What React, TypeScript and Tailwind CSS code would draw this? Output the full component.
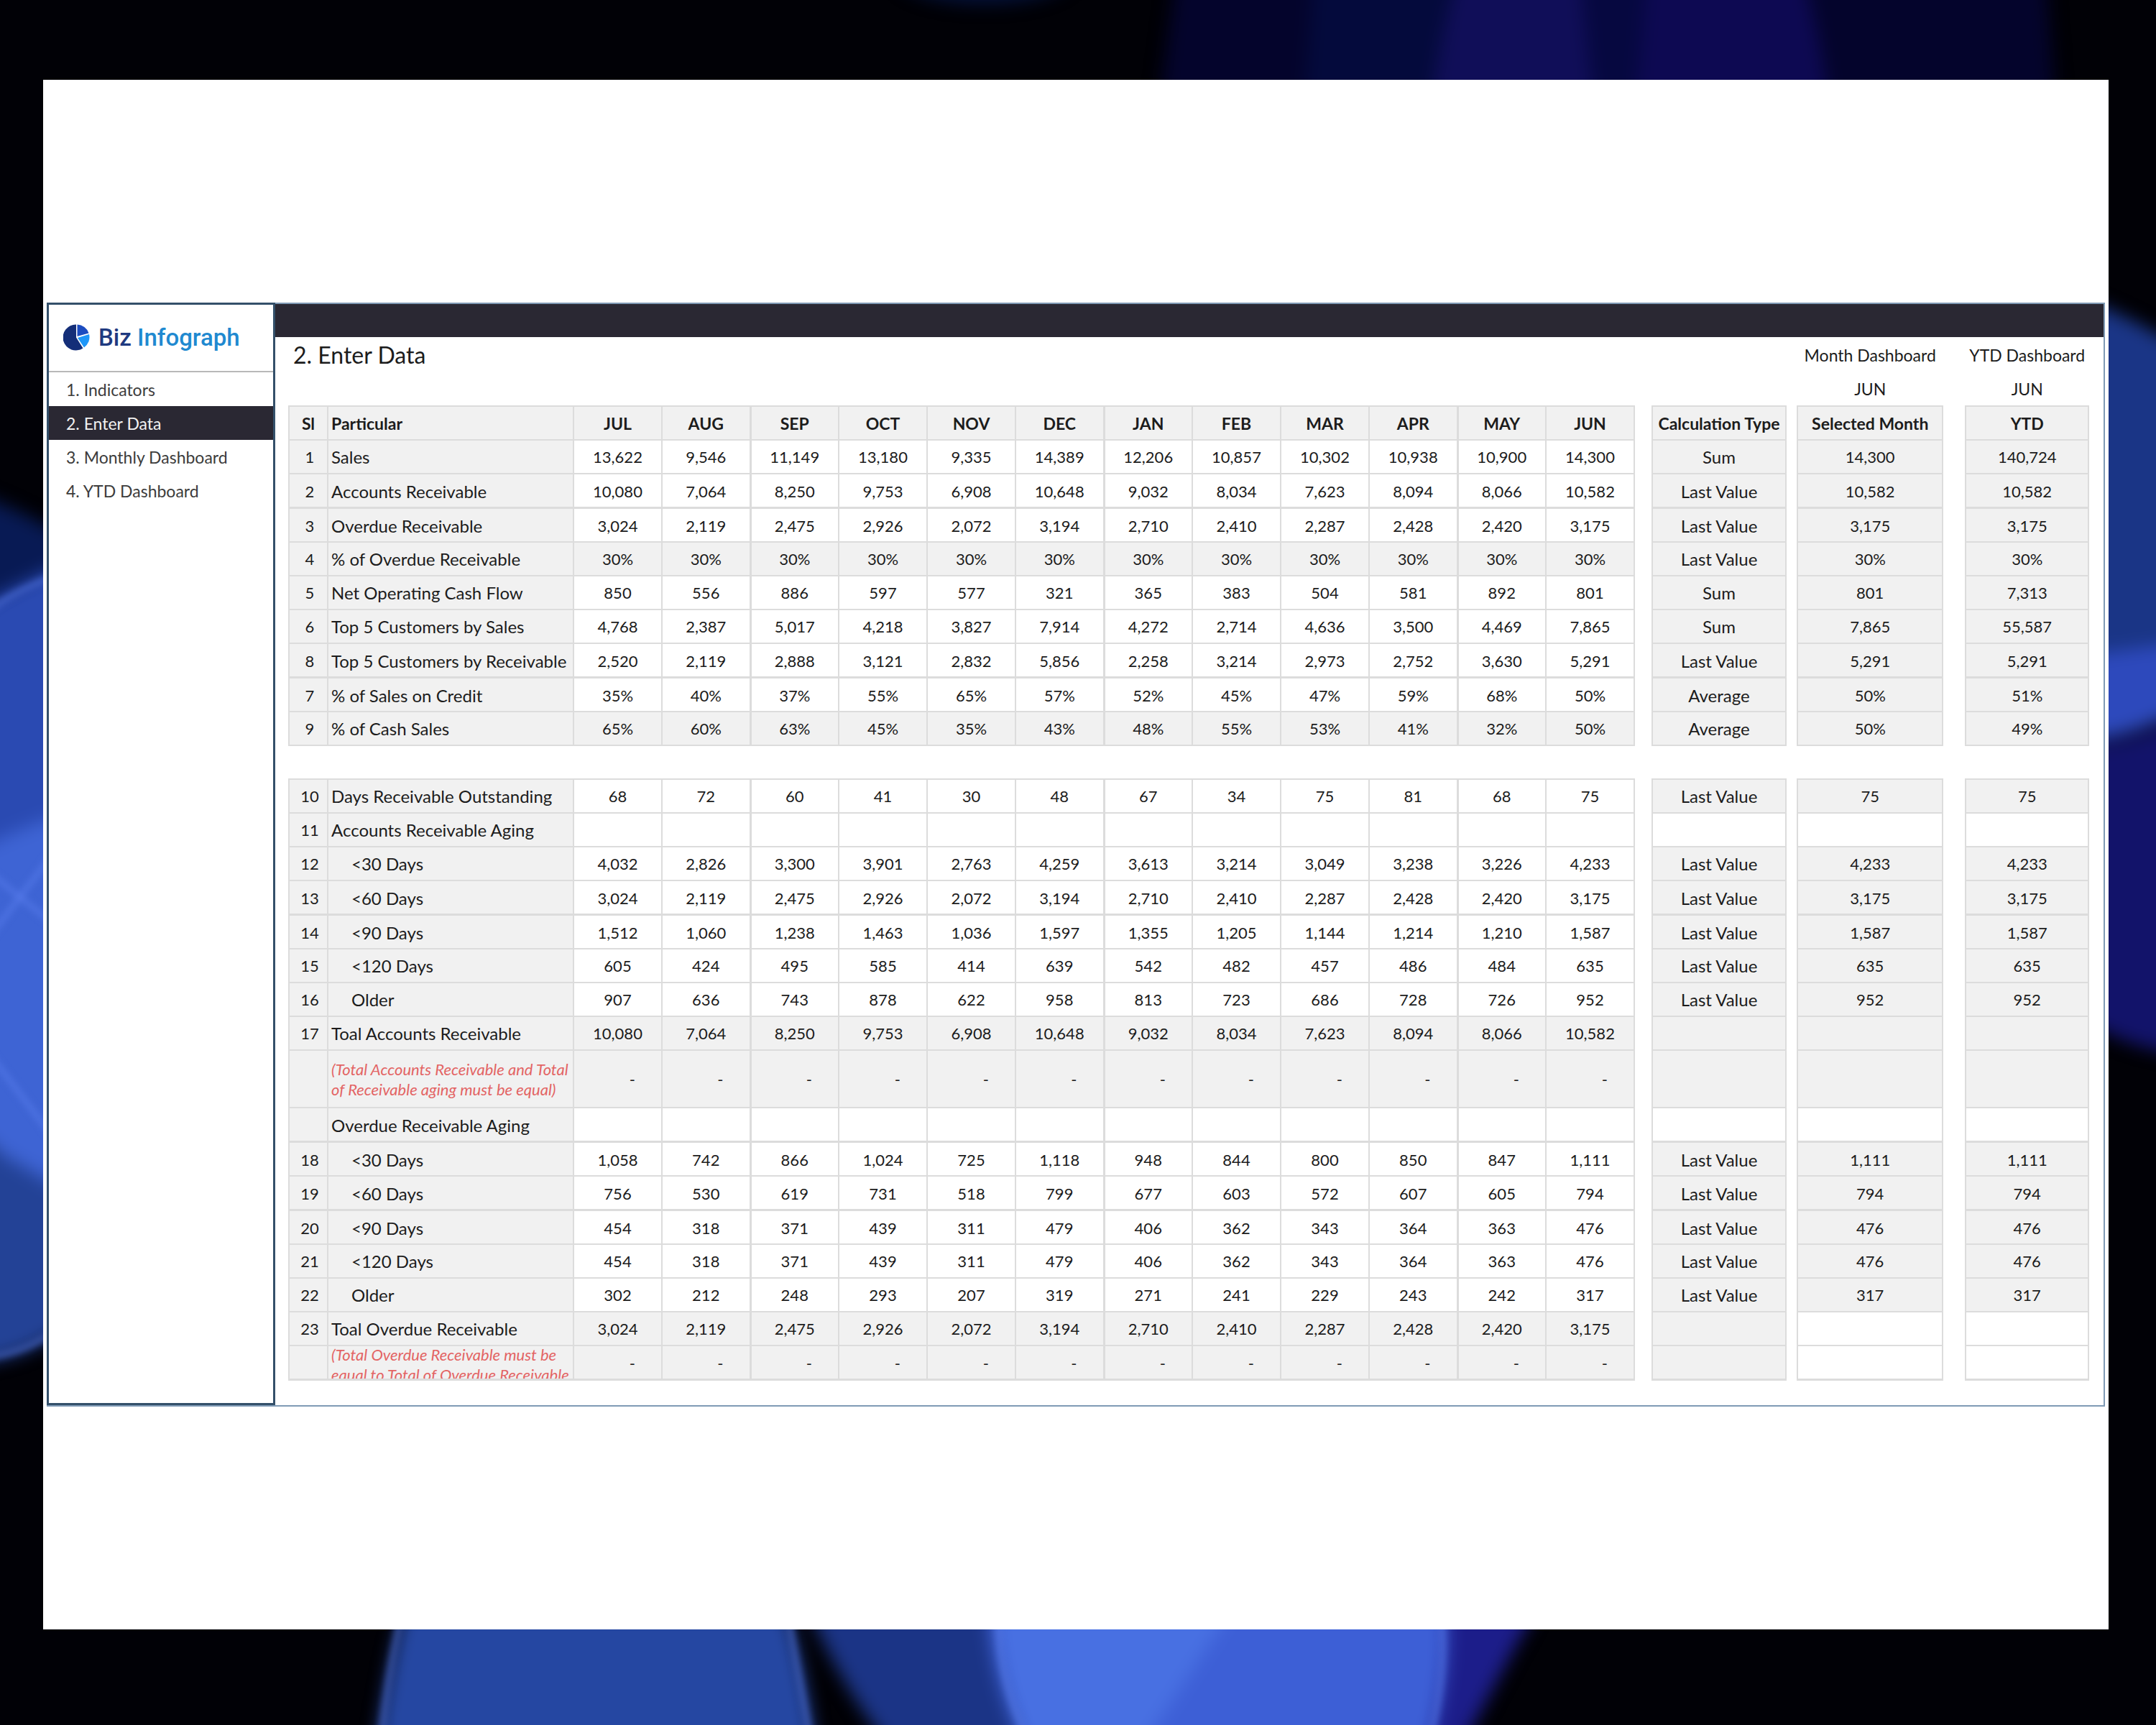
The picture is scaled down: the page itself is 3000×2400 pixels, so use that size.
const MONTHS = ['JUL', 'AUG', 'SEP', 'OCT', 'NOV', 'DEC', 'JAN', 'FEB', 'MAR', 'APR', 'MAY', 'JUN']

const NAV_ITEMS = ['1. Indicators', '2. Enter Data', '3. Monthly Dashboard', '4. YTD Dashboard']

type Row = {
  sl: string
  label: string
  values?: string
  calc?: string
  month?: string
  ytd?: string
  indent?: boolean
  // computed rows are shaded across all months
  shaded?: boolean
  // rows closed by the heavier rule
  heavy?: boolean
  // summary columns left white
  plainSummary?: boolean
  plainCalc?: boolean
}

const TOP_ROWS: Row[] = [
  { sl: '1', label: 'Sales', values: '13,622 9,546 11,149 13,180 9,335 14,389 12,206 10,857 10,302 10,938 10,900 14,300', calc: 'Sum', month: '14,300', ytd: '140,724' },
  { sl: '2', label: 'Accounts Receivable', values: '10,080 7,064 8,250 9,753 6,908 10,648 9,032 8,034 7,623 8,094 8,066 10,582', calc: 'Last Value', month: '10,582', ytd: '10,582', heavy: true },
  { sl: '3', label: 'Overdue Receivable', values: '3,024 2,119 2,475 2,926 2,072 3,194 2,710 2,410 2,287 2,428 2,420 3,175', calc: 'Last Value', month: '3,175', ytd: '3,175' },
  { sl: '4', label: '% of Overdue Receivable', values: '30% 30% 30% 30% 30% 30% 30% 30% 30% 30% 30% 30%', calc: 'Last Value', month: '30%', ytd: '30%', shaded: true },
  { sl: '5', label: 'Net Operating Cash Flow', values: '850 556 886 597 577 321 365 383 504 581 892 801', calc: 'Sum', month: '801', ytd: '7,313' },
  { sl: '6', label: 'Top 5 Customers by Sales', values: '4,768 2,387 5,017 4,218 3,827 7,914 4,272 2,714 4,636 3,500 4,469 7,865', calc: 'Sum', month: '7,865', ytd: '55,587' },
  { sl: '8', label: 'Top 5 Customers by Receivable', values: '2,520 2,119 2,888 3,121 2,832 5,856 2,258 3,214 2,973 2,752 3,630 5,291', calc: 'Last Value', month: '5,291', ytd: '5,291', heavy: true },
  { sl: '7', label: '% of Sales on Credit', values: '35% 40% 37% 55% 65% 57% 52% 45% 47% 59% 68% 50%', calc: 'Average', month: '50%', ytd: '51%' },
  { sl: '9', label: '% of Cash Sales', values: '65% 60% 63% 45% 35% 43% 48% 55% 53% 41% 32% 50%', calc: 'Average', month: '50%', ytd: '49%', shaded: true },
]

const AGING_ROWS: Row[] = [
  { sl: '10', label: 'Days Receivable Outstanding', values: '68 72 60 41 30 48 67 34 75 81 68 75', calc: 'Last Value', month: '75', ytd: '75' },
  { sl: '11', label: 'Accounts Receivable Aging', plainSummary: true, plainCalc: true },
  { sl: '12', label: '<30 Days', values: '4,032 2,826 3,300 3,901 2,763 4,259 3,613 3,214 3,049 3,238 3,226 4,233', calc: 'Last Value', month: '4,233', ytd: '4,233', indent: true },
  { sl: '13', label: '<60 Days', values: '3,024 2,119 2,475 2,926 2,072 3,194 2,710 2,410 2,287 2,428 2,420 3,175', calc: 'Last Value', month: '3,175', ytd: '3,175', indent: true, heavy: true },
  { sl: '14', label: '<90 Days', values: '1,512 1,060 1,238 1,463 1,036 1,597 1,355 1,205 1,144 1,214 1,210 1,587', calc: 'Last Value', month: '1,587', ytd: '1,587', indent: true },
  { sl: '15', label: '<120 Days', values: '605 424 495 585 414 639 542 482 457 486 484 635', calc: 'Last Value', month: '635', ytd: '635', indent: true },
  { sl: '16', label: 'Older', values: '907 636 743 878 622 958 813 723 686 728 726 952', calc: 'Last Value', month: '952', ytd: '952', indent: true },
  { sl: '17', label: 'Toal Accounts Receivable', values: '10,080 7,064 8,250 9,753 6,908 10,648 9,032 8,034 7,623 8,094 8,066 10,582', shaded: true },
]

const OVERDUE_ROWS: Row[] = [
  { sl: '', label: 'Overdue Receivable Aging', plainSummary: true, plainCalc: true, heavy: true },
  { sl: '18', label: '<30 Days', values: '1,058 742 866 1,024 725 1,118 948 844 800 850 847 1,111', calc: 'Last Value', month: '1,111', ytd: '1,111', indent: true },
  { sl: '19', label: '<60 Days', values: '756 530 619 731 518 799 677 603 572 607 605 794', calc: 'Last Value', month: '794', ytd: '794', indent: true, heavy: true },
  { sl: '20', label: '<90 Days', values: '454 318 371 439 311 479 406 362 343 364 363 476', calc: 'Last Value', month: '476', ytd: '476', indent: true },
  { sl: '21', label: '<120 Days', values: '454 318 371 439 311 479 406 362 343 364 363 476', calc: 'Last Value', month: '476', ytd: '476', indent: true },
  { sl: '22', label: 'Older', values: '302 212 248 293 207 319 271 241 229 243 242 317', calc: 'Last Value', month: '317', ytd: '317', indent: true },
  { sl: '23', label: 'Toal Overdue Receivable', values: '3,024 2,119 2,475 2,926 2,072 3,194 2,710 2,410 2,287 2,428 2,420 3,175', shaded: true, plainSummary: true },
]

const CELL = 'border-2 border-[#dcdcdc] p-0 pt-0.5'
const SHADE = 'bg-[#f1f1f1]'

// every fourth month closes with a heavier vertical rule
const monthRule = (i: number) => (i % 4 === 1 ? 'border-r-3' : '')

function Backdrop() {
  return (
    <svg
      className="absolute inset-0 -z-10 h-full w-full"
      viewBox="0 0 3000 2400"
      preserveAspectRatio="none"
      aria-hidden="true"
    >
      <defs>
        <filter id="soft" x="-20%" y="-20%" width="140%" height="140%" colorInterpolationFilters="sRGB">
          <feGaussianBlur stdDeviation="12" />
        </filter>
        <filter id="streak" x="-20%" y="-20%" width="140%" height="140%" colorInterpolationFilters="sRGB">
          <feGaussianBlur stdDeviation="5" />
        </filter>
      </defs>
      <rect width="3000" height="2400" fill="#010106" />
      <g filter="url(#soft)">
        {/* top */}
        <ellipse cx="1370" cy="-35" rx="120" ry="40" fill="#04123c" />
        <path d="M1640-60 1605 200H2865L2845-60Z" fill="#04042c" />
        <path d="M1830-60 1810 200H2010L2040-60Z" fill="#040a3c" />
        <path d="M2040-60Q2000 40 1985 200H2225L2195-60Z" fill="#100e58" />
        <path d="M2195-60 2225 200H2270L2295-60Z" fill="#060840" />
        <path d="M2295-60 2270 200H2550Q2540 60 2500-60Z" fill="#0d0952" />
        {/* left */}
        <path d="M-60 680Q10 695 130 770V860H-60Z" fill="#081a54" />
        <path d="M-60 860Q0 825 130 765V1200H-60Z" fill="#2a4ab2" />
        <path d="M-60 1200Q20 1150 130 1120V1700L-60 1560Z" fill="#3e64d4" />
        <path d="M-60 1570 130 1680V1800Q70 1895-60 1898Z" fill="#234296" />
        {/* right */}
        <path d="M2880 410Q2960 435 3060 500V1000H2880Z" fill="#1a3586" />
        <path d="M2880 915 3060 890V970Q2980 1030 2880 1032Z" fill="#2d49bc" />
        <path d="M2880 1038Q2990 1035 3060 980V1470Q2940 1460 2880 1400Z" fill="#12136a" />
        {/* bottom */}
        <path d="M575 2200Q540 2300 520 2460H1138Q1120 2300 1080 2200Z" fill="#2547a2" />
        <path d="M1110 2200Q1160 2340 1260 2460H2000V2200Z" fill="#1b3486" />
        <path d="M1900 2200H2160Q2080 2340 2020 2460H1900Z" fill="#1c1d8a" />
        <path d="M1375 2200Q1370 2330 1440 2460H1980Q2030 2300 2005 2200Z" fill="#3d5fd6" />
        <path d="M1385 2200Q1380 2330 1440 2460H1570L1740 2200Z" fill="#4870e2" />
      </g>
      <g fill="none" stroke="#5b7ff0" strokeOpacity="0.5" strokeWidth="8" filter="url(#streak)">
        <path d="M-20 855Q10 825 80 800" />
        <path d="M-20 1210 80 1290" />
        <path d="M-20 1310 80 1180" />
        <path d="M-20 1460 80 1590" />
        <path d="M-20 1888Q30 1885 80 1850" />
        <path d="M560 2240Q540 2320 530 2420" />
        <path d="M1095 2240 1128 2420" />
        <path d="M1390 2240Q1385 2330 1430 2420" />
        <path d="M2005 2240Q2015 2320 1990 2420" />
      </g>
    </svg>
  )
}

function Logo() {
  return (
    <a href="#" className="flex h-[94px] items-center gap-3 border-b-2 border-[#b8b8b8] pl-5">
      <svg className="h-[37px] w-[37px]" viewBox="0 0 37 37" aria-hidden="true">
        <path d="M18 18.500V0.500A18 18 0 1 0 27.500 33.500Z" fill="#142e78" />
        <path d="M19.500 17V0.500A17.500 17.500 0 0 1 35.500 12.500Z" fill="#1c4cc0" />
        <path d="M20 19 36 14A17.500 17.500 0 0 1 29 32.500Z" fill="#1e96f8" />
      </svg>
      <span className="font-[Roboto,sans-serif] text-[33px] leading-none font-medium text-[#1f3a80]">
        Biz <span className="text-[#2089d0]">Infograph</span>
      </span>
    </a>
  )
}

function Sidebar() {
  return (
    <aside className="-mt-0.5 -ml-0.5 w-[318px] shrink-0 border-3 border-[#34506a] bg-white">
      <Logo />
      <nav className="flex flex-col">
        {NAV_ITEMS.map((item, i) => (
          <a
            key={item}
            href="#"
            aria-current={i === 1 ? 'page' : undefined}
            className={
              i === 1
                ? 'flex h-[47px] items-center bg-[#2a2833] pt-0.5 pl-6 text-[#f2f2f2]'
                : 'flex h-[47px] items-center pt-0.5 pl-6 text-[#3c3c3c]'
            }
          >
            {item}
          </a>
        ))}
      </nav>
    </aside>
  )
}

function Spacer() {
  return <td className="p-0" />
}

function DataRow({ row }: { row: Row }) {
  const values = row.values ? row.values.split(' ') : MONTHS.map(() => '')
  const summary = row.plainSummary ? CELL : `${CELL} ${SHADE}`
  return (
    <tr className={row.heavy ? 'h-12 [&>td[class*=border]]:border-b-3 [&>th]:border-b-3' : 'h-[47px]'}>
      <td className={`${CELL} ${SHADE} pl-1`}>{row.sl}</td>
      <th scope="row" className={`${CELL} ${SHADE} text-left text-2xl leading-7 font-normal whitespace-nowrap ${row.indent ? 'pl-8' : 'pl-1'}`}>
        {row.label}
      </th>
      {values.map((value, i) => (
        <td key={i} className={`${CELL} ${monthRule(i)} ${row.shaded ? SHADE : ''}`}>{value}</td>
      ))}
      <Spacer />
      <td className={`${CELL} text-2xl leading-7 ${row.plainCalc ? '' : SHADE}`}>{row.calc}</td>
      <Spacer />
      <td className={summary}>{row.month}</td>
      <Spacer />
      <td className={summary}>{row.ytd}</td>
    </tr>
  )
}

function CheckRow({ note, last }: { note: string; last?: boolean }) {
  const summary = last ? CELL : `${CELL} ${SHADE}`
  return (
    <tr className={last ? 'h-12 [&>td[class*=border]]:border-b-3 [&>th]:border-b-3' : 'h-20'}>
      <td className={`${CELL} ${SHADE}`} />
      <th scope="row" className={`${CELL} ${SHADE} pl-1 text-left leading-7 font-normal text-[#e36464] italic`}>
        <div className={last ? 'h-[43px] overflow-hidden' : ''}>
          <div className={last ? '-mt-1 whitespace-pre' : 'whitespace-pre'}>{note}</div>
        </div>
      </th>
      {MONTHS.map((month, i) => (
        <td key={month} className={`${CELL} ${SHADE} ${monthRule(i)} pr-9 text-right`}>-</td>
      ))}
      <Spacer />
      <td className={`${CELL} ${SHADE}`} />
      <Spacer />
      <td className={summary} />
      <Spacer />
      <td className={summary} />
    </tr>
  )
}

function DataTable() {
  return (
    <table className="w-full table-fixed border-collapse text-center text-[22px] leading-7">
      <colgroup>
        <col className="w-[54px]" />
        <col className="w-[342px]" />
        {MONTHS.map((month) => (
          <col key={month} className="w-[123px]" />
        ))}
        <col className="w-[25px]" />
        <col className="w-[186px]" />
        <col className="w-4" />
        <col className="w-[202px]" />
        <col className="w-8" />
        <col className="w-[171px]" />
      </colgroup>
      <thead>
        <tr className="h-12 text-[23px]">
          <td colSpan={17} className="p-0 pt-0.5 pl-1.5 text-left">
            <h1 className="text-[32px] leading-none">2. Enter Data</h1>
          </td>
          <td className="p-0 pt-0.5 whitespace-nowrap">Month Dashboard</td>
          <Spacer />
          <td className="p-0 pt-0.5 whitespace-nowrap">YTD Dashboard</td>
        </tr>
        <tr className="h-12 text-[23px]">
          <td colSpan={17} className="p-0" />
          <td className="p-0 pt-0.5">JUN</td>
          <Spacer />
          <td className="p-0 pt-0.5">JUN</td>
        </tr>
        <tr className="h-[47px] text-[23px]">
          <th scope="col" className={`${CELL} ${SHADE}`}>Sl</th>
          <th scope="col" className={`${CELL} ${SHADE} pl-1 text-left`}>Particular</th>
          {MONTHS.map((month, i) => (
            <th key={month} scope="col" className={`${CELL} ${SHADE} ${monthRule(i)}`}>{month}</th>
          ))}
          <Spacer />
          <th scope="col" className={`${CELL} ${SHADE} whitespace-nowrap`}>Calculation Type</th>
          <Spacer />
          <th scope="col" className={`${CELL} ${SHADE} whitespace-nowrap`}>Selected Month</th>
          <Spacer />
          <th scope="col" className={`${CELL} ${SHADE}`}>YTD</th>
        </tr>
      </thead>
      <tbody>
        {TOP_ROWS.map((row) => (
          <DataRow key={row.sl} row={row} />
        ))}
        <tr className="h-[47px]">
          <td colSpan={20} className="p-0" />
        </tr>
        {AGING_ROWS.map((row) => (
          <DataRow key={row.sl} row={row} />
        ))}
        <CheckRow note={'(Total Accounts Receivable and Total\nof Receivable aging must be equal)'} />
        {OVERDUE_ROWS.map((row) => (
          <DataRow key={row.sl} row={row} />
        ))}
        <CheckRow note={'(Total Overdue Receivable must be\nequal to Total of Overdue Receivable'} last />
      </tbody>
    </table>
  )
}

export default function App() {
  return (
    <div className="relative isolate flex min-h-screen pt-[111px] pr-[66px] pb-[133px] pl-15 font-[Lato,sans-serif] text-[23px] leading-7 text-[#1c1c1c]">
      <Backdrop />
      <div className="flex min-w-0 flex-1 flex-col justify-center bg-white px-[5px]">
        <div className="flex border-2 border-[#7f9ab5]">
          <Sidebar />
          <main className="min-w-0 flex-1">
            <div className="h-[46px] bg-[#2a2833]" />
            <div className="pr-[22px] pb-[34px] pl-[18px]">
              <DataTable />
            </div>
          </main>
        </div>
      </div>
    </div>
  )
}
